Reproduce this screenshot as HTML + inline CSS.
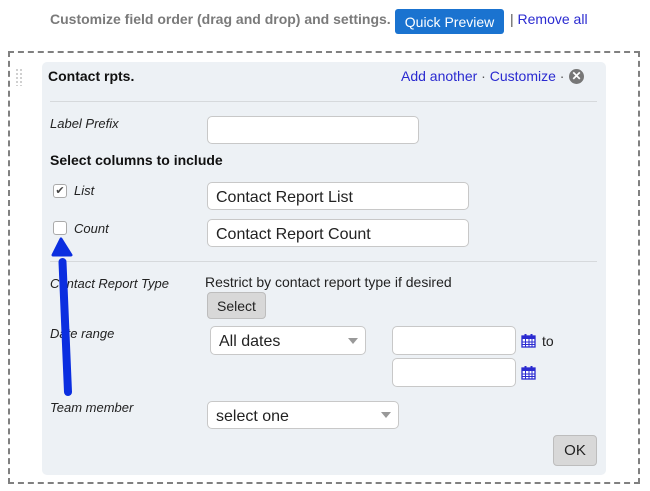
<!DOCTYPE html>
<html><head><style>
*{box-sizing:border-box}
body{margin:0;width:650px;height:491px;background:#fff;font-family:"Liberation Sans",Arial,sans-serif;position:relative;overflow:hidden}
.a{position:absolute}
.it{font-style:italic;font-size:13px;color:#222}
.inp{position:absolute;background:#fff;border:1px solid #c8c8c8;border-radius:5px;font-size:16px;color:#222;padding-left:8px;line-height:30px}
.lnk{color:#2a2ad0}
.btn{position:absolute;background:#d8d8d8;border:1px solid #bdbdbd;border-radius:4px;font-size:14px;color:#222;text-align:center}
.tri{position:absolute;width:0;height:0;border-left:5px solid transparent;border-right:5px solid transparent;border-top:6px solid #999}
</style></head><body>
<div class="a" style="left:50px;top:11px;font-size:14px;font-weight:bold;color:#7a7a7a">Customize field order (drag and drop) and settings.</div>
<div class="a" style="left:395px;top:9px;width:109px;height:25px;background:#1a73d0;border-radius:3px;color:#fff;font-size:14px;text-align:center;line-height:26px">Quick Preview</div>
<div class="a" style="left:510px;top:11px;font-size:14px;color:#555">| <span class="lnk">Remove all</span></div>
<div class="a" style="left:8px;top:51px;width:632px;height:433px;border:2px dashed #808080"></div>
<div class="a" style="left:15px;top:68px;width:8px;height:18px;background-image:radial-gradient(circle,#ccc 1px,transparent 1.2px);background-size:4px 4px"></div>
<div class="a" style="left:42px;top:62px;width:564px;height:413px;background:#edf1f5;border-radius:5px"></div>
<div class="a" style="left:48px;top:68px;font-size:14px;font-weight:bold;color:#111">Contact rpts.</div>
<div class="a" style="left:401px;top:68px;font-size:14px;color:#555"><span class="lnk">Add another</span> · <span class="lnk">Customize</span> ·</div>
<div class="a" style="left:569px;top:69px;width:15px;height:15px;border-radius:50%;background:#777;color:#fff;font-size:12px;font-weight:bold;text-align:center;line-height:15px">✕</div>
<div class="a" style="left:50px;top:101px;width:547px;height:1px;background:#d6d9dc"></div>
<div class="a it" style="left:50px;top:116px">Label Prefix</div>
<div class="inp" style="left:207px;top:116px;width:212px;height:28px"></div>
<div class="a" style="left:50px;top:152px;font-size:14px;font-weight:bold;color:#111">Select columns to include</div>
<div class="a" style="left:53px;top:184px;width:14px;height:14px;border:1px solid #aaa;border-radius:3px;background:#fff;font-size:11px;line-height:12px;text-align:center;color:#444">✔</div>
<div class="a it" style="left:74px;top:183px">List</div>
<div class="inp" style="left:207px;top:182px;width:262px;height:28px">Contact Report List</div>
<div class="a" style="left:53px;top:221px;width:14px;height:14px;border:1px solid #aaa;border-radius:3px;background:#fff"></div>
<div class="a it" style="left:74px;top:221px">Count</div>
<div class="inp" style="left:207px;top:219px;width:262px;height:28px">Contact Report Count</div>
<div class="a" style="left:50px;top:261px;width:547px;height:1px;background:#d6d9dc"></div>
<div class="a it" style="left:50px;top:276px">Contact Report Type</div>
<div class="a" style="left:205px;top:274px;font-size:14px;color:#222">Restrict by contact report type if desired</div>
<div class="btn" style="left:207px;top:292px;width:59px;height:27px;line-height:26px">Select</div>
<div class="a it" style="left:50px;top:326px">Date range</div>
<div class="inp" style="left:210px;top:326px;width:156px;height:29px">All dates</div><div class="tri" style="left:348px;top:338px"></div>
<div class="inp" style="left:392px;top:326px;width:124px;height:29px"></div>
<div class="inp" style="left:392px;top:358px;width:124px;height:29px"></div>
<svg class="a" style="left:521px;top:334px" width="15" height="14"><rect x="1" y="2" width="13" height="11" fill="#fff" stroke="#2a2ad0" stroke-width="1.3"/><rect x="1" y="2" width="13" height="3" fill="#2a2ad0"/><path d="M1 8H14M1 10.5H14M4.5 5V13M8 5V13M11 5V13" stroke="#2a2ad0" stroke-width="1"/><rect x="3.5" y="0" width="2" height="3" fill="#2a2ad0"/><rect x="9.5" y="0" width="2" height="3" fill="#2a2ad0"/></svg>
<div class="a" style="left:542px;top:333px;font-size:14px;color:#222">to</div>
<svg class="a" style="left:521px;top:366px" width="15" height="14"><rect x="1" y="2" width="13" height="11" fill="#fff" stroke="#2a2ad0" stroke-width="1.3"/><rect x="1" y="2" width="13" height="3" fill="#2a2ad0"/><path d="M1 8H14M1 10.5H14M4.5 5V13M8 5V13M11 5V13" stroke="#2a2ad0" stroke-width="1"/><rect x="3.5" y="0" width="2" height="3" fill="#2a2ad0"/><rect x="9.5" y="0" width="2" height="3" fill="#2a2ad0"/></svg>
<div class="a it" style="left:50px;top:400px">Team member</div>
<div class="inp" style="left:207px;top:401px;width:192px;height:28px">select one</div><div class="tri" style="left:381px;top:412px"></div>
<div class="btn" style="left:553px;top:435px;width:44px;height:31px;line-height:30px;font-size:15px">OK</div>
<svg class="a" style="left:0;top:0" width="650" height="491"><path d="M68 392 L62.5 262" stroke="#0b2ee0" stroke-width="8" stroke-linecap="round" fill="none"/><path d="M53 255 L61 239 L71 255 Z" fill="#0b2ee0" stroke="#0b2ee0" stroke-width="3" stroke-linejoin="round"/></svg>
</body></html>
